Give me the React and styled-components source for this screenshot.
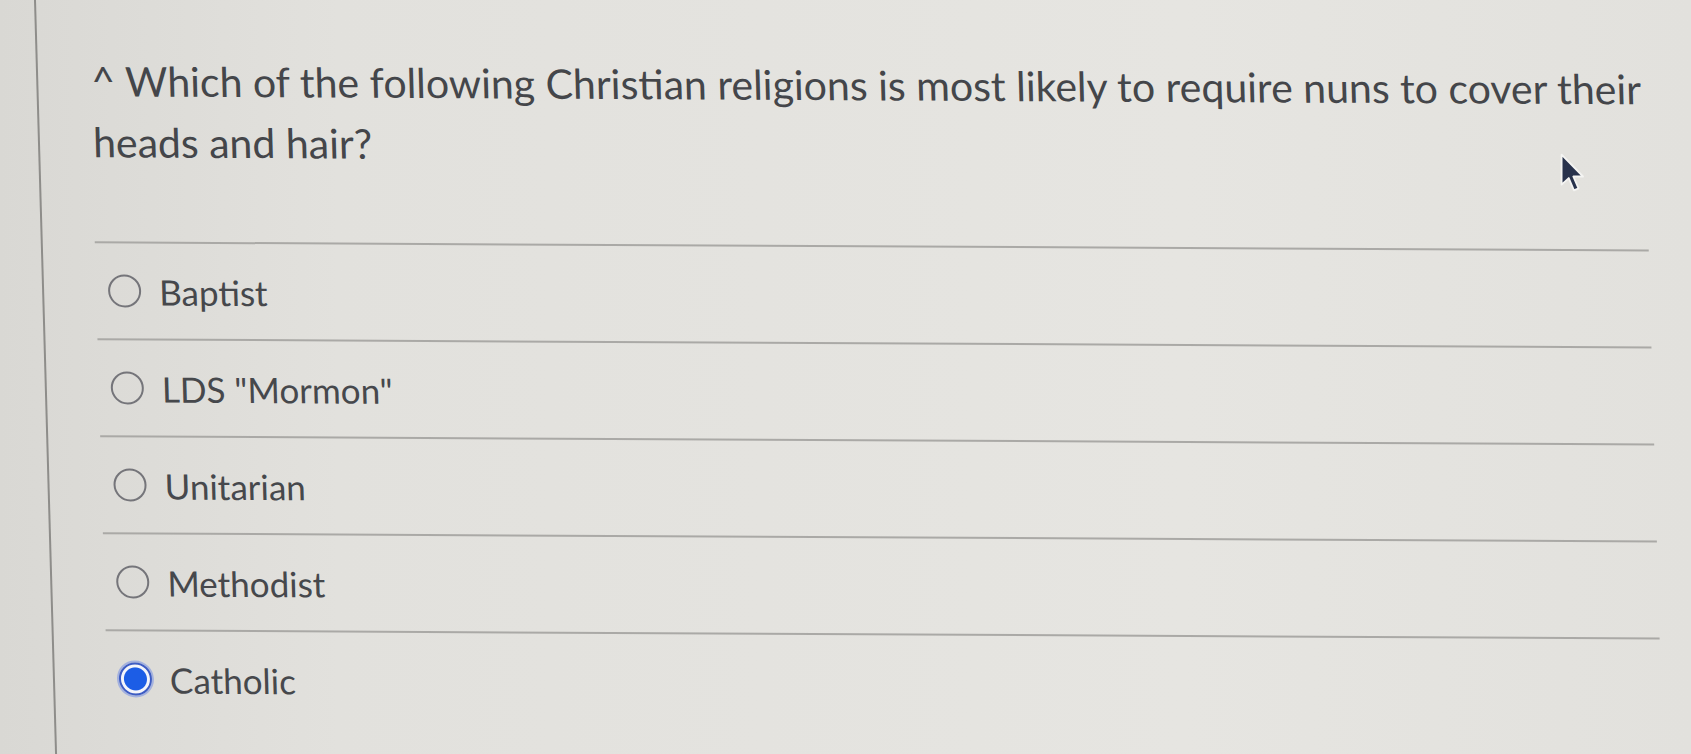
import React from 'react';
import styled, { createGlobalStyle } from 'styled-components';

const GlobalStyle = createGlobalStyle`
    html, body {
        margin: 0;
        padding: 0;
        background: #e2e1dd;
    }
    body {
        font-family: Lato, "Open Sans", sans-serif;
    }
`;

const Screen = styled.div`
    position: relative;
    width: 100%;
    height: 100vh;
    overflow: hidden;
    background: linear-gradient(90deg, #d9d8d4 0%, #e2e1dd 20%, #e6e5e1 70%, #e2e1dd 100%);
`;

/* the photo was taken at a slight angle */
const Frame = styled.div`
    height: 100%;
    margin-left: 34px;
    border-left: 2px solid #8e8d8a;
    transform: skew(1.6deg, 0.3deg);
    transform-origin: 0 0;
    display: flex;
    flex-direction: column;
`;

const Content = styled.div`
    padding-left: 53px;
    display: flex;
    flex-direction: column;
`;

const Question = styled.h2`
    margin: 50px 0 0 0;
    max-width: 1580px;
    font-size: 41px;
    line-height: 61px;
    font-weight: 400;
    color: #44464a;
`;

const Options = styled.div`
    margin: 69px 0 0 -1px;
    width: 1554px;
    display: flex;
    flex-direction: column;
`;

const Row = styled.label`
    height: 95px;
    border-top: 2px solid #aaa9a6;
    display: flex;
    align-items: center;
    gap: 18px;
    padding-left: 12px;
`;

const Radio = styled.span`
    box-sizing: border-box;
    width: 33px;
    height: 33px;
    border-radius: 50%;
    border: 2px solid ${p => (p.$checked ? '#3d5cc4' : '#75757a')};
    background: ${p =>
        p.$checked
            ? 'radial-gradient(circle, #1c5de6 0 11px, #f4f5fb 12px)'
            : 'transparent'};
    box-shadow: ${p => (p.$checked ? '0 0 0 2px rgba(140, 160, 225, 0.7)' : 'none')};
`;

const Label = styled.span`
    font-size: 35px;
    line-height: 42px;
    color: #46484c;
`;

const Cursor = styled.svg`
    position: absolute;
    left: 1559px;
    top: 153px;
`;

const options = ['Baptist', 'LDS "Mormon"', 'Unitarian', 'Methodist', 'Catholic'];

const App = () => {
    return (
        <>
            <GlobalStyle />
            <Screen>
                <Frame>
                    <Content>
                        <Question>
                            ^ Which of the following Christian religions is most likely to require nuns to cover their heads and hair?
                        </Question>
                        <Options>
                            {options.map(o => (
                                <Row key={o}>
                                    <Radio $checked={o === 'Catholic'} />
                                    <Label>{o}</Label>
                                </Row>
                            ))}
                        </Options>
                    </Content>
                </Frame>
                <Cursor width="26" height="41" viewBox="0 0 20 31">
                    <path
                        d="M2 1 L2 24 L7.5 19 L11.5 28.5 L15 27 L11 17.8 L18.5 17.8 Z"
                        fill="#28324c"
                        stroke="#f4f4f2"
                        strokeWidth="1.4"
                        strokeLinejoin="round"
                    />
                </Cursor>
            </Screen>
        </>
    );
};

export default App;
